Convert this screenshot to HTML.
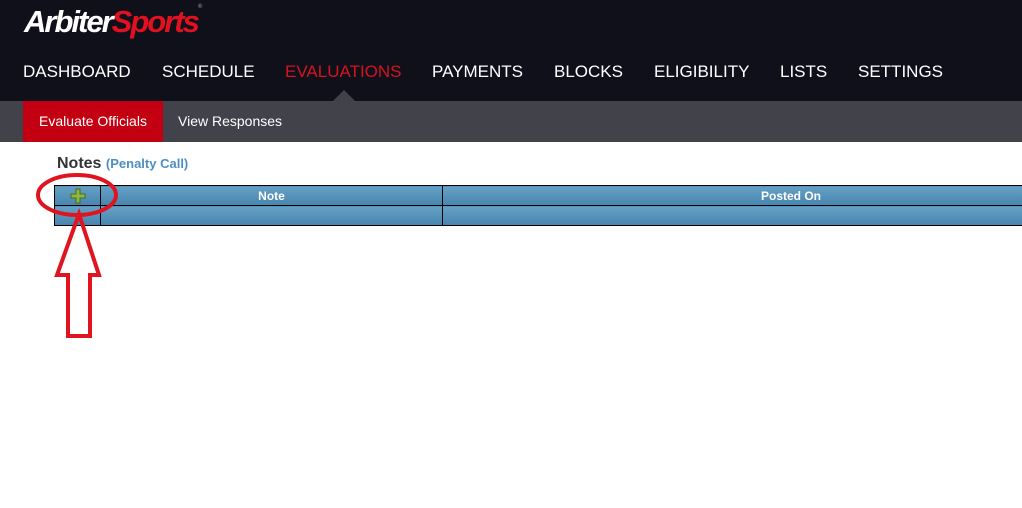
<!DOCTYPE html>
<html><head><style>
body{margin:0;width:1022px;height:508px;overflow:hidden;background:#fff;font-family:"Liberation Sans",Arial,sans-serif;position:relative}
.top{position:absolute;left:0;top:0;width:1022px;height:101px;background:#10101b}
.logo{position:absolute;left:24px;top:4px;font-size:31px;font-weight:bold;font-style:italic;letter-spacing:-2px}
.nav span{position:absolute;top:62px;font-size:17px;color:#fff;white-space:nowrap}
.sub{position:absolute;left:0;top:101px;width:1022px;height:41px;background:#42424a}
.tab{position:absolute;top:0;height:41px;line-height:41px;font-size:14px;color:#fff}
.tri{position:absolute;left:333px;top:90px;width:0;height:0;border-left:11px solid transparent;border-right:11px solid transparent;border-bottom:11px solid #42424a}
table{position:absolute;left:54px;top:185px;border-collapse:collapse;width:1086px}
td{border:1px solid #000;height:19px;padding:0;background:linear-gradient(#66a0c4,#4685b0);color:#fff;font-size:12px;font-weight:bold;text-align:center}
</style></head><body>
<div class="top">
<div class="logo"><span style="color:#fff">Arbiter</span><span style="color:#e3101f">Sports</span><span style="color:#888;font-size:6px;vertical-align:top">®</span></div>
<div class="nav"><span style="left:23px">DASHBOARD</span><span style="left:162px">SCHEDULE</span><span style="left:285px;color:#d4141f">EVALUATIONS</span><span style="left:432px">PAYMENTS</span><span style="left:554px">BLOCKS</span><span style="left:654px">ELIGIBILITY</span><span style="left:780px">LISTS</span><span style="left:858px">SETTINGS</span></div>
<div class="tri"></div>
</div>
<div class="sub">
<div class="tab" style="left:23px;width:140px;background:#c20012;text-align:center">Evaluate Officials</div>
<div class="tab" style="left:178px">View Responses</div>
</div>
<div style="position:absolute;left:57px;top:155px;font-size:16px;font-weight:bold;color:#333">Notes <span style="font-size:13px;color:#4d8fc0">(Penalty Call)</span></div>
<table>
<tr><td style="width:45px"><svg width="16" height="16" viewBox="0 0 16 16" style="vertical-align:middle"><path d="M6 1h4v5h5v4h-5v5H6v-5H1V6h5z" fill="#8cb840" stroke="#4a6b1c"/></svg></td><td style="width:341px">Note</td><td>Posted On</td></tr>
<tr><td></td><td></td><td></td></tr>
</table>
<svg style="position:absolute;left:0;top:0" width="1022" height="508">
<ellipse cx="77" cy="195" rx="39" ry="20" fill="none" stroke="#e0141e" stroke-width="4"/>
<path d="M79 214 L99 275 L90 275 L90 336 L68 336 L68 275 L57 275 Z" fill="none" stroke="#e0141e" stroke-width="4"/>
</svg>
</body></html>
